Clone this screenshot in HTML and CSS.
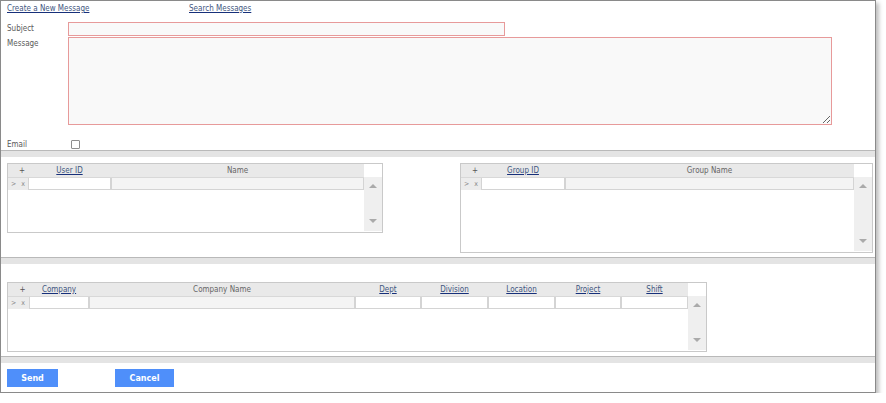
FILE: index.html
```html
<!DOCTYPE html>
<html lang="en">
<head>
  <meta charset="UTF-8" />
  <title>Messages</title>
  <link rel="stylesheet" href="styles.css">
</head>
<body>

  <div class="window">

    <div class="links">
      <a href="#">Create a New Message</a>
      <a href="#">Search Messages</a>
    </div>

    <div class="form">
      <label>Subject</label>
      <input type="text" class="field subject" />
      <label>Message</label>
      <textarea class="field message"></textarea>
      <label class="email-label">Email</label>
      <input type="checkbox" class="check" />
    </div>

    <div class="divider"></div>

    <div class="section pair">
      <div class="grid grid-user">
        <div class="grid-main">
          <div class="grid-row grid-head">
            <span class="cell mark">+</span>
            <span class="cell"><a href="#">User ID</a></span>
            <span class="cell">Name</span>
          </div>
          <div class="grid-row grid-edit">
            <span class="cell mark">&gt; x</span>
            <span class="cell box"></span>
            <span class="cell box shaded"></span>
          </div>
        </div>
        <div class="scroll"><span class="arrow up"></span><span class="arrow down"></span></div>
      </div>

      <div class="grid grid-group">
        <div class="grid-main">
          <div class="grid-row grid-head">
            <span class="cell mark">+</span>
            <span class="cell"><a href="#">Group ID</a></span>
            <span class="cell">Group Name</span>
          </div>
          <div class="grid-row grid-edit">
            <span class="cell mark">&gt; x</span>
            <span class="cell box"></span>
            <span class="cell box shaded"></span>
          </div>
        </div>
        <div class="scroll"><span class="arrow up"></span><span class="arrow down"></span></div>
      </div>
    </div>

    <div class="divider"></div>

    <div class="section single">
      <div class="grid grid-company">
        <div class="grid-main">
          <div class="grid-row grid-head">
            <span class="cell mark">+</span>
            <span class="cell"><a href="#">Company</a></span>
            <span class="cell">Company Name</span>
            <span class="cell"><a href="#">Dept</a></span>
            <span class="cell"><a href="#">Division</a></span>
            <span class="cell"><a href="#">Location</a></span>
            <span class="cell"><a href="#">Project</a></span>
            <span class="cell"><a href="#">Shift</a></span>
          </div>
          <div class="grid-row grid-edit">
            <span class="cell mark">&gt; x</span>
            <span class="cell box"></span>
            <span class="cell box shaded"></span>
            <span class="cell box"></span>
            <span class="cell box"></span>
            <span class="cell box"></span>
            <span class="cell box"></span>
            <span class="cell box"></span>
          </div>
        </div>
        <div class="scroll"><span class="arrow up"></span><span class="arrow down"></span></div>
      </div>
    </div>

    <div class="divider"></div>

    <div class="actions">
      <button class="btn send">Send</button>
      <button class="btn cancel">Cancel</button>
    </div>

  </div>

</body>
</html>
```

FILE: styles.css
```css
body {
  margin: 0;
  background-color: white;
  font-family: "DejaVu Sans Condensed", "DejaVu Sans", sans-serif;
  font-size: 8px;
  color: #5a5a5a;
}

.window {
  width: 876px;
  height: 393px;
  box-sizing: border-box;
  border: 1px solid #8a8a8a;
  box-shadow: 3px 3px 4px rgba(0, 0, 0, 0.25);
  background: white;
}

a {
  color: #3f5680;
  text-decoration: underline;
  text-decoration-color: #17307a;
}

/* top links */
.links {
  display: grid;
  grid-template-columns: 182px auto;
  height: 21px;
  box-sizing: border-box;
  padding: 3px 0 0 6px;
  line-height: 10px;
}

.links a {
  justify-self: start;
}

/* message form */
.form {
  display: grid;
  grid-template-columns: 61px 1fr;
  row-gap: 1px;
  padding-left: 6px;
  line-height: 10px;
}

.form label {
  padding-top: 2px;
}

.field {
  box-sizing: border-box;
  margin: 0;
  border: 1px solid #e79a9a;
  background: #f9f9f9;
  font: inherit;
}

.subject {
  width: 437px;
  height: 14px;
}

.message {
  width: 764px;
  height: 88px;
}

.email-label {
  margin-top: 12px;
  height: 12px;
  box-sizing: border-box;
}

.check {
  appearance: none;
  margin: 14px 0 0 3px;
  width: 9px;
  height: 9px;
  border: 1px solid #8f8f8f;
  border-radius: 1px;
  background: white;
}

.divider {
  border-top: 1px solid #b9b9b9;
  height: 6px;
  background: #e4e4e4;
}

.section.pair {
  display: flex;
  gap: 77px;
  padding: 6px 0 4px 6px;
  align-items: flex-start;
}

.section.single {
  padding: 18px 0 4px 6px;
}

/* grids */
.grid {
  display: flex;
  box-sizing: border-box;
  border: 1px solid #c9c9c9;
  background: white;
}

.grid-user { width: 376px; height: 70px; }
.grid-group { width: 413px; height: 90px; }
.grid-company { width: 700px; height: 70px; }

.grid-main {
  flex: 1;
}

.grid-row {
  display: grid;
}

.grid-user .grid-row { grid-template-columns: 20px 83px 1fr; }
.grid-group .grid-row { grid-template-columns: 20px 84px 1fr; }
.grid-company .grid-row { grid-template-columns: 21px 60px 266px 66px 67px 67px 66px 67px; }

.grid-head {
  height: 13px;
  box-sizing: border-box;
  padding-top: 1px;
  line-height: 12px;
  background: #e9e9e9;
  text-align: center;
  color: #666;
}

.grid-head .mark {
  padding-left: 8px;
  color: #555;
}

.grid-edit {
  height: 12px;
  border-top: 1px solid #d8d8d8;
  background: #ececec;
}

.grid-edit .mark {
  font-size: 7px;
  line-height: 12px;
  color: #888;
  padding-left: 3px;
  word-spacing: 3px;
}

.cell.box {
  box-sizing: border-box;
  height: 12px;
  border: 1px solid #d4d4d4;
  border-top: none;
  background: white;
}

.cell.shaded {
  background: #f4f4f4;
}

.scroll {
  width: 18px;
  margin: 13px 0 1px;
  background: #efefef;
  display: flex;
  flex-direction: column;
  justify-content: space-between;
  align-items: center;
  padding: 7px 0 8px;
  box-sizing: border-box;
}

.arrow {
  width: 0;
  height: 0;
  border-left: 4px solid transparent;
  border-right: 4px solid transparent;
}

.arrow.up { border-bottom: 4px solid #aaa; }
.arrow.down { border-top: 4px solid #aaa; }

/* buttons */
.actions {
  display: flex;
  gap: 57px;
  padding: 6px 0 0 6px;
}

.btn {
  height: 18px;
  border: none;
  padding: 0;
  background: #4f8ffa;
  color: white;
  font-family: "DejaVu Sans", sans-serif;
  font-weight: bold;
  font-size: 8px;
}

.send { width: 51px; }
.cancel { width: 59px; }
```
